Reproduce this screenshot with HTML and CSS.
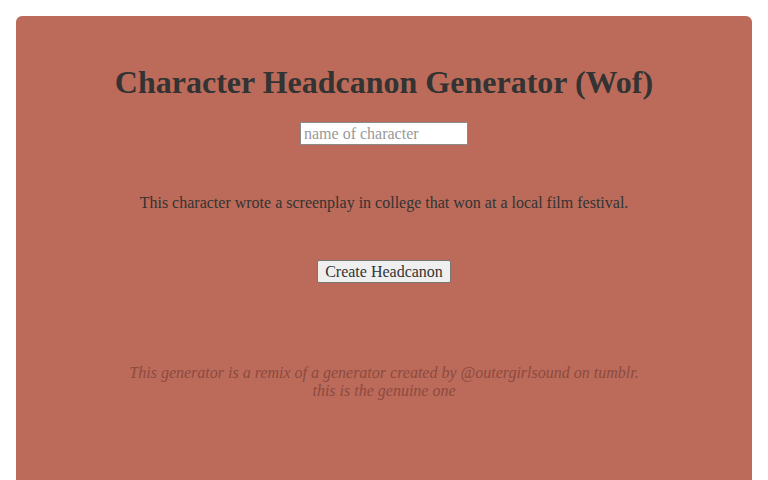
FILE: index.html
```html
<!DOCTYPE html>
<html lang="en">
  <head>
    <meta charset="UTF-8" />
    <meta name="viewport" content="width=device-width, initial-scale=1.0" />
    <title>Character Headcanon Generator (Wof)</title>
    <link rel="stylesheet" href="styles.css">
  </head>
  <body>
    <div class="card">
      <h1 class="title">Character Headcanon Generator (Wof)</h1>
      <input id="charName" class="name-input" type="text" placeholder="name of character" />
      <p id="result" class="result">This character wrote a screenplay in college that won at a local film festival.</p>
      <button class="make-btn">Create Headcanon</button>
      <p class="credit">This generator is a remix of a generator created by @outergirlsound on tumblr.<br>this is the genuine one</p>
    </div>
  </body>
</html>
```

FILE: styles.css
```css
body {
  margin: 0;
  padding: 16px 16px 0;
  background: #fff;
  font-family: "Liberation Serif", "Times New Roman", serif;
}
.card {
  background-color: #bc6b5a;
  border-radius: 6px 6px 0 0;
  height: 464px;
  text-align: center;
  padding-top: 48px;
  box-sizing: border-box;
}
.title {
  margin: 0;
  font-size: 32px;
  font-weight: bold;
  color: #333;
  line-height: 36px;
}
.name-input {
  display: block;
  margin: 22px auto 0;
  width: 168px;
  height: 23px;
  box-sizing: border-box;
  border: 1px solid #8a8a8a;
  padding: 0 3px;
  font-family: "Liberation Serif", serif;
  font-size: 16px;
  background: #fff;
}
.name-input::placeholder {
  font-family: "Liberation Serif", serif;
  color: #999;
}
.result {
  margin: 49px 0 0;
  font-size: 16px;
  line-height: 18px;
  color: #333;
}
.make-btn {
  display: block;
  margin: 48px auto 0;
  height: 23px;
  padding: 0 7px;
  font-family: "Liberation Serif", serif;
  font-size: 16px;
  color: #333;
  background: #efefef;
  border: 1px solid #767676;
  border-radius: 2px;
}
.credit {
  margin: 81px 0 0;
  font-size: 16px;
  line-height: 18px;
  font-style: italic;
  color: #8c4a3f;
}
```
